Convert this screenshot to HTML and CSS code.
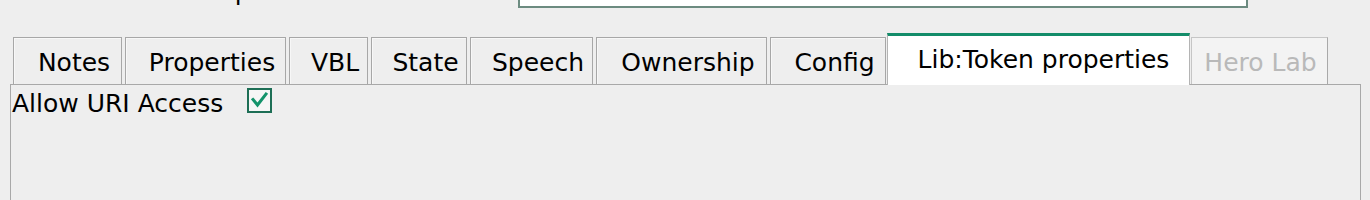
FILE: index.html
```html
<!DOCTYPE html>
<html lang="en">
<head>
  <meta charset="UTF-8" />
  <title>Edit Token - Lib:Token properties</title>
  <link rel="stylesheet" href="styles.css">
</head>
<body>

  <!-- Speech bubble name row (mostly scrolled off the top) -->
  <div class="name-row">
    <span class="name-label">Speech Bubble Name:</span>
    <div class="name-field">lib:core</div>
  </div>

  <!-- Tab strip -->
  <div class="tabs">
    <div class="tab">Notes</div>
    <div class="tab">Properties</div>
    <div class="tab">VBL</div>
    <div class="tab">State</div>
    <div class="tab">Speech</div>
    <div class="tab">Ownership</div>
    <div class="tab">Config</div>
    <div class="tab active">Lib:Token properties</div>
    <div class="tab disabled">Hero Lab</div>
  </div>

  <!-- Tab content -->
  <div class="panel">
    <label class="check-row">
      <span class="check-label">Allow URI Access</span>
      <span class="checkbox">
        <svg width="21" height="21" viewBox="0 0 21 21">
          <path d="M4 9.5 L8.5 15 L17 4" fill="none" stroke="#14936b" stroke-width="3" stroke-linecap="square" />
        </svg>
      </span>
    </label>
  </div>

</body>
</html>
```

FILE: styles.css
```css
/* Basic Resets */
* { margin: 0; padding: 0; box-sizing: border-box; }
body {
  background-color: #eeeeee;
  color: #000;
  font-family: "DejaVu Sans", "Liberation Sans", sans-serif;
  font-size: 25px;
  height: 200px;
  overflow: hidden;
}

/* === Name row === */
.name-row {
  display: flex;
  align-items: baseline;
  margin-top: -28px;
  height: 36px;
}
.name-label {
  width: 496px;
  text-align: right;
  line-height: 28px;
  flex-shrink: 0;
}
.name-field {
  margin-left: 22px;
  width: 730px;
  height: 36px;
  padding: 4px 6px 0;
  line-height: 28px;
  background: #fff;
  border: 2px solid #6c8b80;
  color: #222;
}

/* === Tabs === */
.tabs {
  display: grid;
  grid-template-columns: 109px 161px 79px 96px 123px 171px 116px 299px 137px;
  column-gap: 3px;
  align-items: end;
  margin-top: 25px;
  padding-left: 13px;
}
.tab {
  height: 47px;
  padding: 11px 0 0 13px;
  line-height: 28px;
  text-align: center;
  white-space: nowrap;
  background: #eeeeee;
  border: 1px solid #a7a7a7;
  border-bottom: none;
  box-shadow: inset 1px 1px 0 #f7f7f7;
}
.tab.active {
  position: relative;
  z-index: 1;
  height: 52px;
  margin: 0 -2px -1px;
  padding-top: 10px;
  padding-left: 10px;
  background: #fff;
  border-top: 3px solid #138c69;
  border-left-color: #b4b4b4;
  border-right-color: #b4b4b4;
  box-shadow: none;
}
.tab.disabled {
  padding-left: 2px;
  color: #b9b9b9;
  background: #f3f3f3;
  border-color: #c6c6c6;
  border-right-color: #a9a9a9;
  box-shadow: none;
}

/* === Panel === */
.panel {
  margin: 0 9px 0 10px;
  height: 140px;
  border: 1px solid #a8a8a8;
  background: #eeeeee;
  padding: 5px 0 0 1px;
}
.check-row {
  display: flex;
  align-items: flex-start;
}
.check-label {
  line-height: 28px;
}
.checkbox {
  display: flex;
  align-items: center;
  justify-content: center;
  width: 25px;
  height: 25px;
  margin-top: -2px;
  margin-left: 24px;
  border: 2px solid #1d6e55;
  background: #f6f6f6;
}
.checkbox svg { display: block; }
```
